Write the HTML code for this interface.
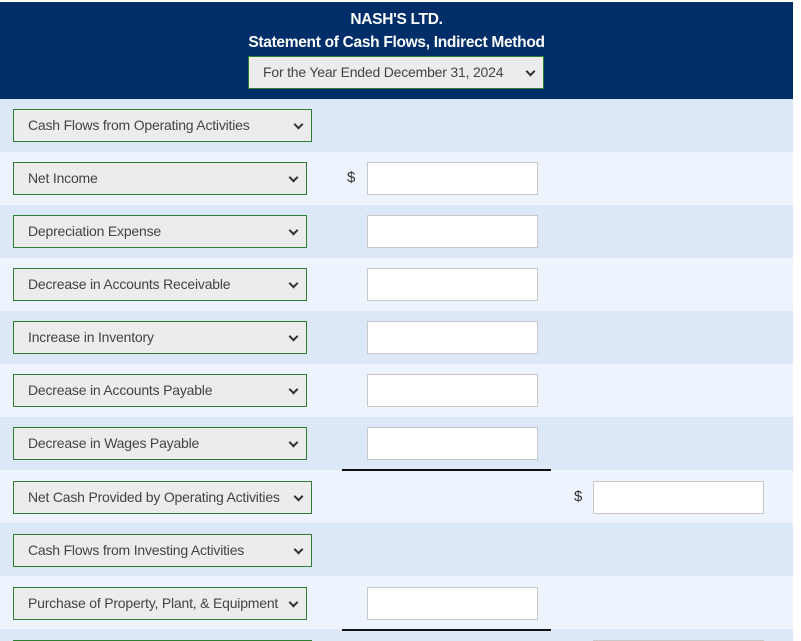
<!DOCTYPE html>
<html><head><style>
*{box-sizing:border-box;margin:0;padding:0}
html,body{width:801px;height:641px;overflow:hidden}
body{background:#fff;font-family:"Liberation Sans",sans-serif;position:relative}
.hd{position:absolute;left:0;top:2px;width:793px;height:97px;background:#002e69;color:#fff;text-align:center}
.t1{position:absolute;left:0;width:100%;top:9px;font-size:15.5px;font-weight:bold;letter-spacing:-0.3px}
.t2{position:absolute;left:0;width:100%;top:32px;font-size:15.5px;font-weight:bold;letter-spacing:-0.3px}
.sel{position:absolute;background:#ececec;border:1px solid #2e7d32;color:#444;font-size:14px;line-height:31px;padding-left:14px;height:33px;letter-spacing:-0.2px;overflow:hidden;white-space:nowrap}
.sel::after{content:"";position:absolute;right:9px;top:11px;width:5px;height:5px;border-right:2px solid #333;border-bottom:2px solid #333;transform:rotate(45deg)}
.row{position:absolute;left:0;width:793px;height:53px}
.a{background:#dce8f8}.b{background:#edf4fd}
.in{position:absolute;background:#fff;border:1px solid #c8c8c8;height:33px;width:171px}
.d{position:absolute;font-size:15px;color:#333}
.ln{position:absolute;height:2px;background:#111;left:342px;width:209px}
</style></head><body>
<div class="hd"><div class="t1">NASH'S LTD.</div><div class="t2">Statement of Cash Flows, Indirect Method</div></div>
<div class="sel" style="left:248px;top:56px;width:296px;height:33px">For the Year Ended December 31, 2024</div>
<div class="row a" style="top:99px"></div>
<div class="row b" style="top:152px"></div>
<div class="row a" style="top:205px"></div>
<div class="row b" style="top:258px"></div>
<div class="row a" style="top:311px"></div>
<div class="row b" style="top:364px"></div>
<div class="row a" style="top:417px"></div>
<div class="row b" style="top:470px"></div>
<div class="row a" style="top:523px"></div>
<div class="row b" style="top:576px"></div>
<div class="row a" style="top:629px;height:12px"></div>
<div class="sel" style="left:13px;top:109px;width:299px">Cash Flows from Operating Activities</div>
<div class="sel" style="left:13px;top:162px;width:294px">Net Income</div>
<div class="sel" style="left:13px;top:215px;width:294px">Depreciation Expense</div>
<div class="sel" style="left:13px;top:268px;width:294px">Decrease in Accounts Receivable</div>
<div class="sel" style="left:13px;top:321px;width:294px">Increase in Inventory</div>
<div class="sel" style="left:13px;top:374px;width:294px">Decrease in Accounts Payable</div>
<div class="sel" style="left:13px;top:427px;width:294px">Decrease in Wages Payable</div>
<div class="sel" style="left:13px;top:481px;width:299px">Net Cash Provided by Operating Activities</div>
<div class="sel" style="left:13px;top:534px;width:299px">Cash Flows from Investing Activities</div>
<div class="sel" style="left:13px;top:587px;width:294px">Purchase of Property, Plant, &amp; Equipment</div>
<div style="position:absolute;left:13px;top:640px;width:299px;height:1px;background:#2e7d32"></div>
<div class="d" style="left:347px;top:169px">$</div>
<div class="in" style="left:367px;top:162px"></div>
<div class="in" style="left:367px;top:215px"></div>
<div class="in" style="left:367px;top:268px"></div>
<div class="in" style="left:367px;top:321px"></div>
<div class="in" style="left:367px;top:374px"></div>
<div class="in" style="left:367px;top:427px"></div>
<div class="ln" style="top:469px"></div>
<div class="d" style="left:574px;top:488px">$</div>
<div class="in" style="left:593px;top:481px;width:171px"></div>
<div class="in" style="left:367px;top:587px"></div>
<div class="ln" style="top:629px"></div>
<div style="position:absolute;left:593px;top:640px;width:171px;height:1px;background:#c8c8c8"></div>
</body></html>
